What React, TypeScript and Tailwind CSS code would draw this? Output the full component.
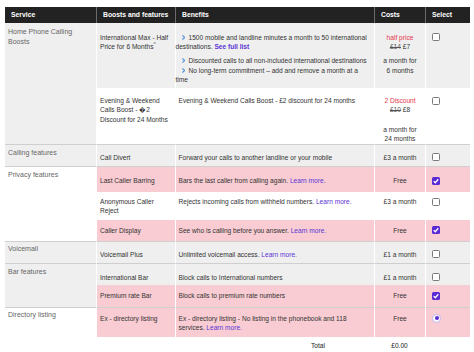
import React from "react";

type Sel = "off" | "on" | "radio";
type Svc = { label: string; span: number; bg: string; pt: string };
type Row = {
  h: string;
  pt: string;
  bg: string;
  top: boolean;
  svc?: Svc;
  boost: React.ReactNode;
  benefit: React.ReactNode;
  cost: React.ReactNode;
  sel: Sel;
};

const GRAY = "bg-[#efefef]";
const WHITE = "bg-white";
const PINK = "bg-[#f8ccd2]";

const Link = ({ children, bold }: { children: React.ReactNode; bold?: boolean }) => (
  <span className={bold ? "font-bold text-[#5b34d6]" : "text-[#5b34d6]"}>{children}</span>
);

const Bullet = () => (
  <span className="inline-block w-[13px] pl-[6px]">
    <svg viewBox="0 0 3 5" className="inline-block h-[5px] w-[3px] align-[0px]">
      <path d="M0.3 0.4 L2.6 2.5 L0.3 4.6" fill="none" stroke="#4f8fd6" strokeWidth="1.1" />
    </svg>
  </span>
);

const Box = ({ s }: { s: Sel }) => {
  if (s === "on")
    return (
      <span className="flex h-2 w-2 items-center justify-center rounded-[1.5px] bg-[#5a2bd5]">
        <svg viewBox="0 0 8 8" className="h-2 w-2">
          <path d="M1.7 4.1 L3.3 5.7 L6.3 2.3" fill="none" stroke="white" strokeWidth="1.3" />
        </svg>
      </span>
    );
  if (s === "radio")
    return (
      <span className="flex h-[9px] w-[9px] items-center justify-center rounded-full border border-[#c2b2f0] bg-white">
        <span className="h-1 w-1 rounded-full bg-[#5a2bd5]" />
      </span>
    );
  return <span className="block h-2 w-2 rounded-[1.5px] border border-[#7a7a7a] bg-white" />;
};

const rows: Row[] = [
  {
    h: "h-[65px]",
    pt: "pt-[9.5px]",
    bg: GRAY,
    top: false,
    svc: { label: "Home Phone Calling Boosts", span: 2, bg: GRAY, pt: "pt-[4px]" },
    boost: (
      <>
        International Max - Half Price for 6 Months
        <span className="align-super text-[4.5px] leading-none">^</span>
      </>
    ),
    benefit: (
      <ul className="-ml-[3px]">
        <li className="mb-[5px]">
          <Bullet />
          1500 mobile and landline minutes a month to 50 international destinations.{" "}
          <Link bold>See full list</Link>
        </li>
        <li>
          <Bullet />
          Discounted calls to all non-included international destinations
        </li>
        <li>
          <Bullet />
          No long-term commitment – add and remove a month at a
          <br />
          time
        </li>
      </ul>
    ),
    cost: (
      <>
        <div className="text-[#e8364c]">half price</div>
        <div>
          <span className="text-[#555] line-through">£14</span> £7
        </div>
        <div className="mt-[5px]">a month for</div>
        <div>6 months</div>
      </>
    ),
    sel: "off",
  },
  {
    h: "h-[56px]",
    pt: "pt-[8px]",
    bg: WHITE,
    top: false,
    boost: <>Evening &amp; Weekend Calls Boost - {"\uFFFD"}2 Discount for 24 Months</>,
    benefit: <>Evening &amp; Weekend Calls Boost - £2 discount for 24 months</>,
    cost: (
      <>
        <div className="text-[#e8364c]">2 Discount</div>
        <div>
          <span className="text-[#555] line-through">£10</span> £8
        </div>
        <div className="mt-[10px]">a month for</div>
        <div>24 months</div>
      </>
    ),
    sel: "off",
  },
  {
    h: "h-[22px]",
    pt: "pt-[7.5px]",
    bg: GRAY,
    top: true,
    svc: { label: "Calling features", span: 1, bg: GRAY, pt: "pt-[3px]" },
    boost: "Call Divert",
    benefit: "Forward your calls to another landline or your mobile",
    cost: "£3 a month",
    sel: "off",
  },
  {
    h: "h-[26px]",
    pt: "pt-[9px]",
    bg: PINK,
    top: true,
    svc: { label: "Privacy features", span: 3, bg: WHITE, pt: "pt-[3px]" },
    boost: "Last Caller Barring",
    benefit: (
      <>
        Bars the last caller from calling again. <Link>Learn more.</Link>
      </>
    ),
    cost: "Free",
    sel: "on",
  },
  {
    h: "h-[28px]",
    pt: "pt-[5px]",
    bg: WHITE,
    top: false,
    boost: "Anonymous Caller Reject",
    benefit: (
      <>
        Rejects incoming calls from withheld numbers. <Link>Learn more.</Link>
      </>
    ),
    cost: "£3 a month",
    sel: "off",
  },
  {
    h: "h-[21px]",
    pt: "pt-[5.5px]",
    bg: PINK,
    top: false,
    boost: "Caller Display",
    benefit: (
      <>
        See who is calling before you answer. <Link>Learn more.</Link>
      </>
    ),
    cost: "Free",
    sel: "on",
  },
  {
    h: "h-[22px]",
    pt: "pt-[7.5px]",
    bg: GRAY,
    top: true,
    svc: { label: "Voicemail", span: 1, bg: GRAY, pt: "pt-[1.5px]" },
    boost: "Voicemail Plus",
    benefit: (
      <>
        Unlimited voicemail access. <Link>Learn more.</Link>
      </>
    ),
    cost: "£1 a month",
    sel: "off",
  },
  {
    h: "h-[22px]",
    pt: "pt-[8.5px]",
    bg: GRAY,
    top: true,
    svc: { label: "Bar features", span: 2, bg: GRAY, pt: "pt-[3px]" },
    boost: "International Bar",
    benefit: "Block calls to International numbers",
    cost: "£1 a month",
    sel: "off",
  },
  {
    h: "h-[22px]",
    pt: "pt-[6px]",
    bg: PINK,
    top: false,
    boost: "Premium rate Bar",
    benefit: "Block calls to premium rate numbers",
    cost: "Free",
    sel: "on",
  },
  {
    h: "h-[30px]",
    pt: "pt-[5.5px]",
    bg: PINK,
    top: true,
    svc: { label: "Directory listing", span: 1, bg: WHITE, pt: "pt-[2px]" },
    boost: "Ex - directory listing",
    benefit: (
      <>
        Ex - directory listing - No listing in the phonebook and 118 services. <Link>Learn more.</Link>
      </>
    ),
    cost: "Free",
    sel: "radio",
  },
];

export default function App() {
  return (
    <div className="h-[352px] w-[474px] overflow-hidden bg-white pl-[5px] pt-[7px] font-['Liberation_Sans',Arial,Helvetica,sans-serif] text-[#333]">
      <table className="w-[465px] table-fixed border-separate border-spacing-0 text-[6.6px] leading-[9.4px]">
        <colgroup>
          <col className="w-[91px]" />
          <col className="w-[79px]" />
          <col className="w-[199px]" />
          <col className="w-[51px]" />
          <col className="w-[45px]" />
        </colgroup>
        <thead>
          <tr className="h-[16px] bg-[#222] text-left text-[6.8px] font-bold text-white">
            <th className="pl-[6px] align-middle font-bold">Service</th>
            <th className="border-l border-[#6a6a6a] pl-[6px] align-middle font-bold">Boosts and features</th>
            <th className="border-l border-[#6a6a6a] pl-[6px] align-middle font-bold">Benefits</th>
            <th className="border-l border-[#6a6a6a] pl-[6px] align-middle font-bold">Costs</th>
            <th className="border-l border-[#6a6a6a] pl-[6px] align-middle font-bold">Select</th>
          </tr>
        </thead>
        <tbody>
          {rows.map((r, i) => {
            const tb = r.top ? "border-t border-t-[#cfcfcf]" : "";
            return (
              <tr key={i} className={r.h}>
                {r.svc && (
                  <td
                    rowSpan={r.svc.span}
                    className={`${r.svc.bg} ${tb} ${r.svc.pt} pl-[3px] pr-[2px] align-top text-[7px] leading-[10px] text-[#666]`}
                  >
                    {r.svc.label}
                  </td>
                )}
                <td className={`${r.bg} ${tb} ${r.pt} border-l border-l-white pl-[3px] pr-[4px] align-top`}>{r.boost}</td>
                <td className={`${r.bg} ${tb} ${r.pt} border-l border-l-white pl-[2.5px] pr-[1px] align-top`}>{r.benefit}</td>
                <td className={`${r.bg} ${tb} ${r.pt} border-l border-l-white px-[1px] text-center align-top`}>{r.cost}</td>
                <td className={`${r.bg} ${tb} ${r.pt} border-l border-l-white pl-[6px] align-top`}>
                  <div className="flex h-[9.4px] items-center">
                    <Box s={r.sel} />
                  </div>
                </td>
              </tr>
            );
          })}
          <tr className="h-[15px]">
            <td />
            <td />
            <td className="pr-[49px] pt-[4px] text-right align-top text-[#222]">Total</td>
            <td className="pt-[4px] text-center align-top text-[#222]">£0.00</td>
            <td />
          </tr>
        </tbody>
      </table>
    </div>
  );
}
